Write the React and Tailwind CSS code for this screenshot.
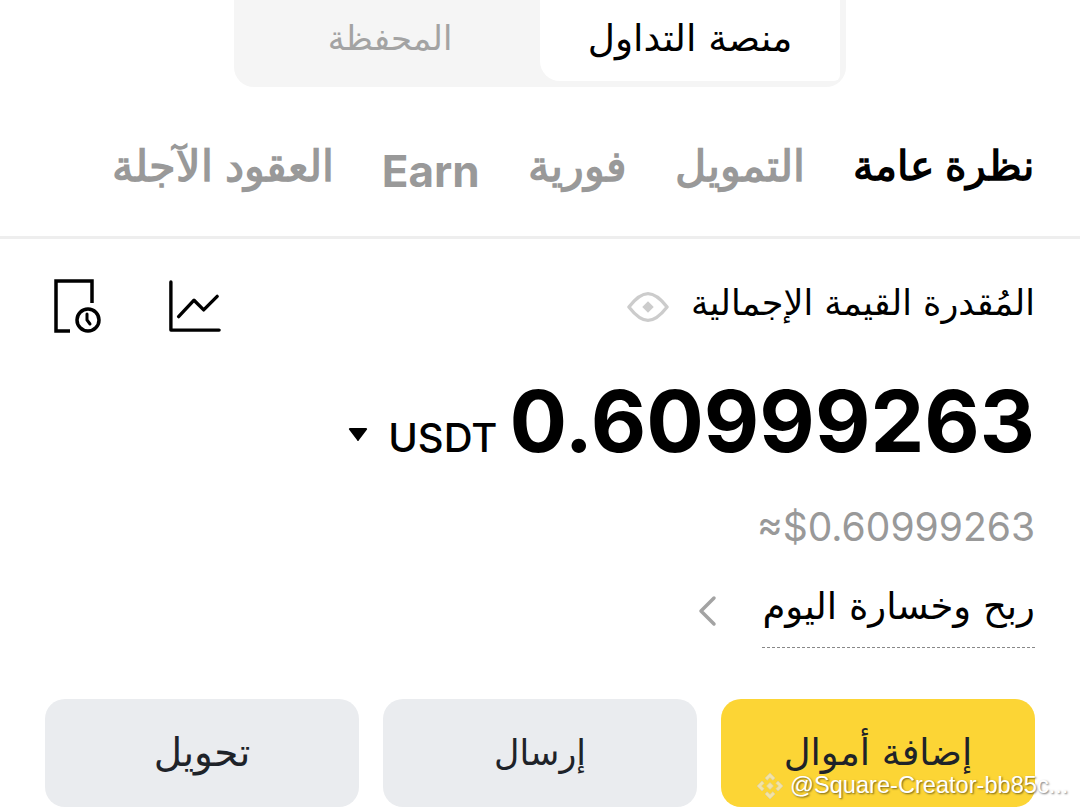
function EyeIcon() {
  return (
    <svg width="42" height="34" viewBox="0 0 44 34" fill="none">
      <path d="M2 17C9 8 15 3 22 3s13 5 20 14c-7 9-13 14-20 14S9 26 2 17z" stroke="#cccccc" strokeWidth="3.5" strokeLinejoin="round" />
      <path d="M22 11l6 6-6 6-6-6z" fill="#cccccc" />
    </svg>
  );
}

function HistoryIcon() {
  return (
    <svg width="50" height="56" viewBox="0 0 50 56" fill="none" stroke="#000" strokeWidth="3.5" strokeLinecap="round">
      <path d="M38 24V2H2v50h14" strokeLinecap="butt" />
      <circle cx="34" cy="41" r="11" />
      <path d="M33 35v6l3 4" strokeWidth="3" />
    </svg>
  );
}

function ChartIcon() {
  return (
    <svg width="54" height="54" viewBox="0 0 56 56" fill="none" stroke="#000" strokeWidth="3.5" strokeLinecap="round" strokeLinejoin="round" className="self-start">
      <path d="M3 3v50h50" />
      <path d="M11 39l16-17 10 10 14-14" />
    </svg>
  );
}

function Chevron() {
  return (
    <svg width="22" height="32" viewBox="0 0 22 32" fill="none" stroke="#a3a3a3" strokeWidth="3.5" strokeLinecap="round" strokeLinejoin="round">
      <path d="M18 3L5 16l13 13" />
    </svg>
  );
}

function BinanceMark() {
  return (
    <svg width="28" height="28" viewBox="0 0 28 28" fill="#f3e3a5" stroke="#c9c9c9" strokeWidth="0.5">
      <path d="M14 1l5 5-2.200 2.200L14 5.400l-2.800 2.800L9 6z" />
      <path d="M14 27l5-5-2.200-2.200-2.800 2.800-2.800-2.800L9 22z" />
      <path d="M1 14l5-5 2.200 2.200L5.400 14l2.800 2.800L6 19z" />
      <path d="M27 14l-5-5-2.200 2.200 2.800 2.800-2.800 2.800L22 19z" />
      <path d="M14 10.500l3.500 3.500-3.500 3.500-3.500-3.500z" />
    </svg>
  );
}

export default function App() {
  return (
    <div dir="rtl" className="relative w-[1080px] h-[810px] overflow-hidden bg-white font-['DejaVu_Sans',sans-serif] text-black">
      {/* top switch */}
      <div className="flex justify-center">
        <div className="flex w-[612px] h-[87px] pr-[6px] pb-[6px] bg-[#f5f5f5] rounded-b-[20px]">
          <div className="w-[300px] flex items-center justify-center pb-[4px] bg-white rounded-bl-[20px] rounded-br-[6px] text-[37.5px]">منصة التداول</div>
          <div className="w-[300px] flex items-center justify-center pb-[4px] text-[34px] text-[#a3a3a3]">المحفظة</div>
        </div>
      </div>

      {/* tabs */}
      <div className="flex items-center gap-[48px] h-[152px] pr-[46px] pt-[10px] border-b-[3px] border-[#eeeeee] font-['Liberation_Sans',sans-serif] text-[43px] font-bold text-[#999999]">
        <span className="text-black text-[41px]">نظرة عامة</span>
        <span>التمويل</span>
        <span>فورية</span>
        <span className="font-['Inter',sans-serif] text-[44px] mt-[8px]">Earn</span>
        <span>العقود الآجلة</span>
      </div>

      {/* balance */}
      <div className="px-[45px]">
        <div className="flex items-center justify-between pt-[40px]">
          <div className="flex items-center gap-[22px] text-[35px] leading-[46px]">
            <span className="pb-[8px]">المُقدرة القيمة الإجمالية</span>
            <EyeIcon />
          </div>
          <div className="flex items-center gap-[64px] pl-[9px]">
            <ChartIcon />
            <HistoryIcon />
          </div>
        </div>

        <div dir="ltr" className="flex items-baseline justify-end mt-[30px]">
          <svg width="20" height="14" viewBox="0 0 20 14" className="mr-[20px] self-center mt-[26px]"><path d="M2 1h16a1 1 0 0 1 1 1.500L11 13a1 1 0 0 1-2 0L1 2.500A1 1 0 0 1 2 1z" fill="#000" /></svg>
          <span className="font-['Inter',sans-serif] text-[40px] font-medium mr-[12px]">USDT</span>
          <span className="font-['Inter',sans-serif] text-[85.500px] leading-[112px] font-bold">0.60999263</span>
        </div>

        <div dir="ltr" className="text-right font-['Inter',sans-serif] text-[39px] leading-[46px] text-[#999999] mt-[27px]">≈$0.60999263</div>

        <div className="flex items-center gap-[44px] mt-[24px]">
          <span className="text-[37px] leading-[58px] pt-[4px] pb-[11px] border-b border-dashed border-[#888888]">ربح وخسارة اليوم</span>
          <Chevron />
        </div>

        <div className="grid grid-cols-3 gap-[24px] mt-[51px]">
          <div className="h-[108px] flex items-center justify-center rounded-[20px] bg-[#fcd535] text-[37px] text-[#1e2329]">إضافة أموال</div>
          <div className="h-[108px] flex items-center justify-center rounded-[20px] bg-[#eaecef] text-[35px] text-[#1e2329]">إرسال</div>
          <div className="h-[108px] flex items-center justify-center rounded-[20px] bg-[#eaecef] text-[39px] text-[#1e2329]">تحويل</div>
        </div>
      </div>

      {/* watermark */}
      <div dir="ltr" className="absolute left-[756px] top-[768px] flex items-center gap-[6px] font-['Liberation_Sans',sans-serif] text-[23.600px] text-white [text-shadow:1px_1px_2px_rgba(0,0,0,0.55)] whitespace-nowrap">
        <BinanceMark />
        <span>@Square-Creator-bb85c...</span>
      </div>
    </div>
  );
}
